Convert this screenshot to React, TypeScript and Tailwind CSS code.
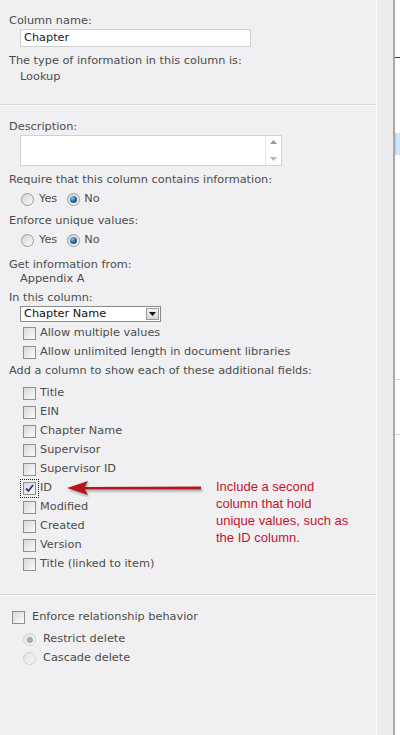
import React from 'react';

// small gray checkbox like the old IE/SharePoint one
function CheckBox({ checked, focus }: { checked?: boolean; focus?: boolean }) {
  return (
    <span className={focus ? 'flex items-center justify-center w-[19px] h-[19px] border border-dotted border-[#222]' : 'flex items-center justify-center w-[19px] h-[19px]'}>
      <span className="relative w-[13px] h-[13px] border border-[#8e8f8f] bg-linear-to-br from-[#d9d9d9] to-[#fbfbfb]">
        {checked && (
          <svg viewBox="0 0 11 11" className="absolute left-0 top-0 w-[11px] h-[11px]">
            <polyline points="2,5.5 4.5,8 9,2" fill="none" stroke="#2a3f7a" strokeWidth="1.8" />
          </svg>
        )}
      </span>
    </span>
  );
}

function Radio({ checked, disabled }: { checked?: boolean; disabled?: boolean }) {
  if (disabled) {
    return (
      <span className="flex items-center justify-center w-[13px] h-[13px] rounded-full border border-[#d2d2d2] bg-linear-to-br from-[#e4e4e4] to-[#f6f6f6]">
        {checked && <span className="w-[6px] h-[6px] rounded-full bg-[#a9a9a9]" />}
      </span>
    );
  }
  return (
    <span className="flex items-center justify-center w-[13px] h-[13px] rounded-full border border-[#9b9b9b] bg-linear-to-br from-[#d3d3d3] to-[#fcfcfc]">
      {checked && (
        <span className="w-[7px] h-[7px] rounded-full bg-radial-[at_35%_30%] from-[#8fc3ea] via-[#1f6aa5] to-[#0d3c66]" />
      )}
    </span>
  );
}

function Label({ children, indent }: { children: React.ReactNode; indent?: boolean }) {
  return (
    <div className={indent ? 'h-[14px] flex items-center pl-[11px]' : 'h-[14px] flex items-center'}>{children}</div>
  );
}

function YesNo() {
  return (
    <div className="h-[19px] flex items-center pl-[12px]">
      <Radio />
      <span className="ml-[5px]">Yes</span>
      <span className="ml-[10px]">
        <Radio checked />
      </span>
      <span className="ml-[4px]">No</span>
    </div>
  );
}

function CheckRow({ label, checked, focus }: { label: string; checked?: boolean; focus?: boolean }) {
  return (
    <div className="h-[19px] flex items-center pl-[11px]">
      <CheckBox checked={checked} focus={focus} />
      <span className="ml-[1px]">{label}</span>
    </div>
  );
}

const fields = ['Title', 'EIN', 'Chapter Name', 'Supervisor', 'Supervisor ID'];
const fieldsAfter = ['Modified', 'Created', 'Version', 'Title (linked to item)'];

export default function App() {
  return (
    <div className="w-[400px] h-[735px] flex bg-white overflow-hidden font-['DejaVu_Sans',Verdana,sans-serif] text-[11.3px] text-[#4c4c4c]">
      {/* main panel */}
      <div className="w-[376px] h-full flex flex-col bg-[#f0f0f2]">
        {/* column name */}
        <div className="h-[104px] pt-[13px] px-[9px] flex flex-col">
          <div className="h-[16px] flex items-center">Column name:</div>
          <div className="mt-[0px] ml-[11px] w-[231px] h-[18px] bg-white border border-[#cfcfcf] flex items-center pl-[3px] text-[#222]">
            Chapter
          </div>
          <div className="mt-[6px] h-[16px] flex items-center">The type of information in this column is:</div>
          <div className="h-[16px] flex items-center pl-[11px]">Lookup</div>
        </div>
        <div className="h-px bg-[#d9d9dc]" />
        <div className="h-px bg-[#fafafa]" />

        {/* settings */}
        <div className="h-[488px] pt-[13px] px-[9px] flex flex-col">
          <div className="h-[16px] flex items-center">Description:</div>
          <div className="ml-[11px] w-[262px] h-[31px] bg-white border border-[#d2d2d2] flex justify-end">
            <div className="w-[16px] h-full border-l border-[#e6e6e6] flex flex-col items-center justify-between py-[4px]">
              <svg viewBox="0 0 7 4" className="w-[7px] h-[4px]">
                <polygon points="0,4 3.5,0 7,4" fill="#9a9a9a" />
              </svg>
              <svg viewBox="0 0 7 4" className="w-[7px] h-[4px]">
                <polygon points="0,0 3.5,4 7,0" fill="#b5b5b5" />
              </svg>
            </div>
          </div>
          <div className="mt-[6px] h-[16px] flex items-center">Require that this column contains information:</div>
          <div className="mt-[2px]">
            <YesNo />
          </div>
          <div className="mt-[4px] h-[16px] flex items-center">Enforce unique values:</div>
          <div className="mt-[2px]">
            <YesNo />
          </div>
          <div className="mt-[8px]">
            <Label>Get information from:</Label>
            <Label indent>Appendix A</Label>
          </div>
          <div className="mt-[5px]">
            <Label>In this column:</Label>
          </div>
          <div className="mt-[1px] ml-[11px] w-[141px] h-[16px] bg-white border border-[#8a8a8a] flex items-center justify-between pl-[3px] pr-[1px] text-[#111]">
            <span>Chapter Name</span>
            <span className="w-[13px] h-[12px] border border-[#9a9a9a] bg-linear-to-b from-[#f4f4f4] to-[#d6d6d6] flex items-center justify-center">
              <svg viewBox="0 0 7 4" className="w-[7px] h-[4px]">
                <polygon points="0,0 3.5,4 7,0" fill="#111" />
              </svg>
            </span>
          </div>
          <div className="mt-[2px]">
            <CheckRow label="Allow multiple values" />
            <CheckRow label="Allow unlimited length in document libraries" />
          </div>
          <div className="mt-[2px]">
            <Label>Add a column to show each of these additional fields:</Label>
          </div>
          <div className="mt-[6px] flex flex-col">
            {fields.map((f) => (
              <CheckRow key={f} label={f} />
            ))}
            <div className="relative">
              <CheckRow label="ID" checked focus />
              {/* callout arrow */}
              <svg viewBox="0 0 140 20" className="absolute left-[57px] top-0 w-[140px] h-[20px]">
                <defs>
                  <filter id="sh" x="-10%" y="-50%" width="120%" height="200%">
                    <feDropShadow dx="1" dy="2" stdDeviation="1.2" floodColor="#777" floodOpacity="0.6" />
                  </filter>
                </defs>
                <g filter="url(#sh)">
                  <polygon points="1,9 22,2 19,8 135,7.5 135,10.5 19,10.5 22,16" fill="#b3131b" />
                </g>
              </svg>
              <div className="absolute left-[207px] top-[-1px] w-[136px] font-['Liberation_Sans',Arial,sans-serif] text-[13px] leading-[17px] text-[#c8102e]">
                Include a second column that hold unique values, such as the ID column.
              </div>
            </div>
            {fieldsAfter.map((f) => (
              <CheckRow key={f} label={f} />
            ))}
          </div>
        </div>
        <div className="h-px bg-[#d9d9dc]" />
        <div className="h-px bg-[#fafafa]" />

        {/* relationship */}
        <div className="pt-[12px] px-[9px] flex flex-col">
          <div className="h-[19px] flex items-center">
            <CheckBox />
            <span className="ml-[4px]">Enforce relationship behavior</span>
          </div>
          <div className="mt-[3px] h-[19px] flex items-center pl-[14px]">
            <Radio checked disabled />
            <span className="ml-[7px]">Restrict delete</span>
          </div>
          <div className="h-[19px] flex items-center pl-[14px]">
            <Radio disabled />
            <span className="ml-[7px]">Cascade delete</span>
          </div>
        </div>
      </div>

      {/* right edge strip */}
      <div className="w-px h-full bg-[#fbfbfb]" />
      <div className="w-[16px] h-full bg-[#ececee]" />
      <div className="w-[2px] h-full bg-[#a9a9ab]" />
      <div className="flex-1 h-full flex flex-col bg-white">
        <div className="h-[57px]" />
        <div className="h-px bg-[#333]" />
        <div className="h-[75px]" />
        <div className="h-[22px] bg-[#cfe6f8] border-l border-[#a8cdee]" />
        <div className="h-[224px]" />
        <div className="h-px bg-[#d6d6d6]" />
        <div className="h-[54px]" />
        <div className="h-px bg-[#d6d6d6]" />
      </div>
    </div>
  );
}
